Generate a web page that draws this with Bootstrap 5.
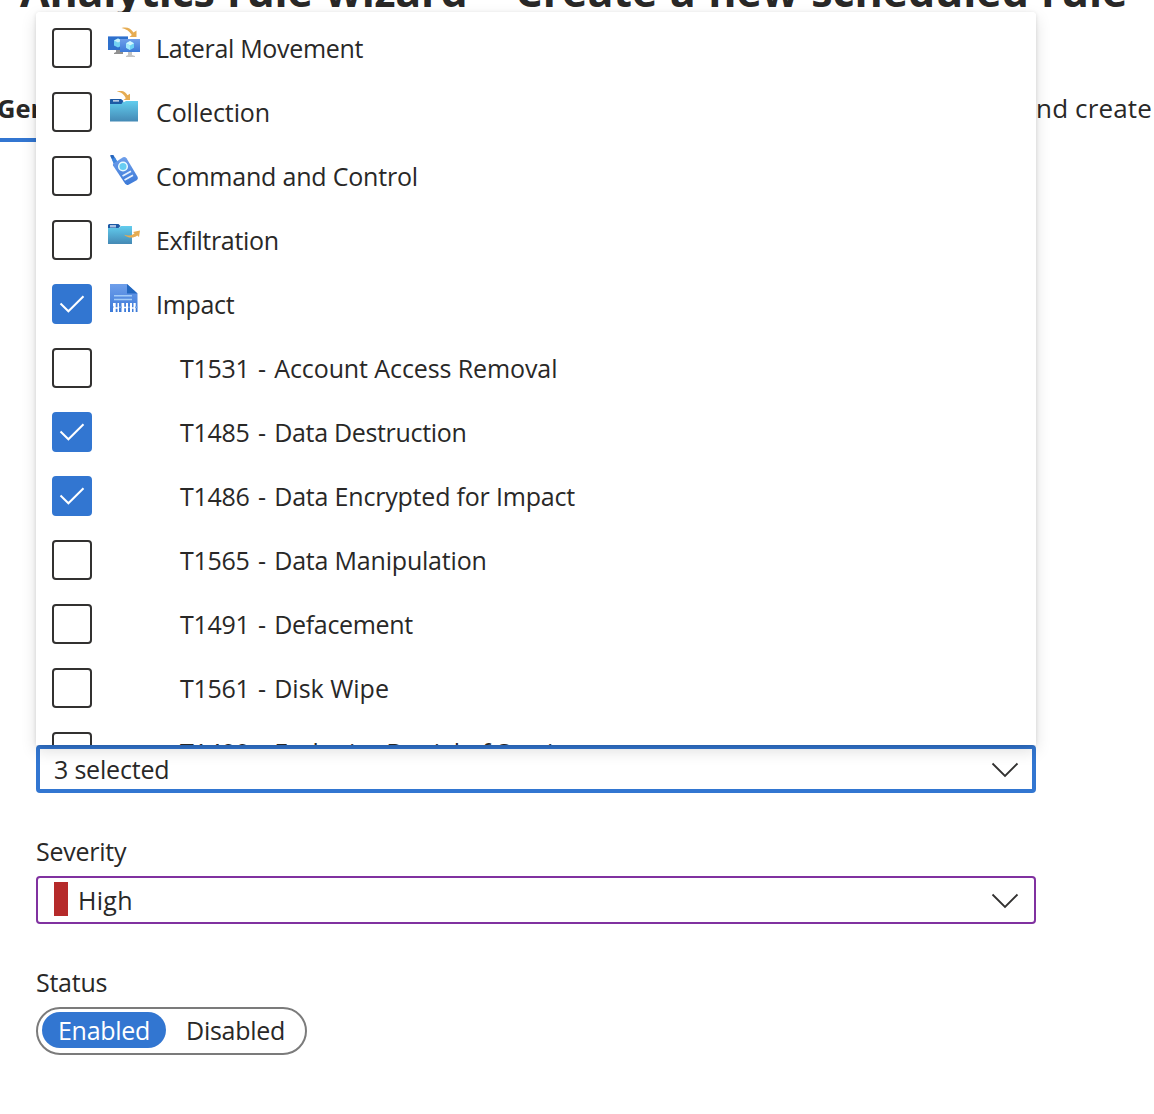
<!DOCTYPE html>
<html lang="en">
<head>
<meta charset="utf-8">
<title>Analytics rule wizard</title>
<meta name="viewport" content="width=device-width, initial-scale=1">
<link rel="stylesheet" href="https://cdn.jsdelivr.net/npm/bootstrap@5.3.0/dist/css/bootstrap.min.css">
<style>
body{font-family:"Open Sans","Noto Sans",sans-serif;font-size:25px;line-height:36px;color:#292827;background:#fff;height:1114px;overflow:hidden}
.wizard{height:1114px;overflow:hidden}
.wizard-title{font-size:43px;font-weight:700;line-height:56px;margin:-37px 0 0 20px;white-space:nowrap;letter-spacing:-.08px;word-spacing:1.5px}
.title-name{letter-spacing:-.22px}
.title-dash{margin:0 4.5px}
.wizard-tabs{height:123px;padding-top:71px;margin-left:-3px;padding-right:2px}
.tab-current{height:52px;font-weight:700;font-size:25.5px;border-bottom:4px solid #3276d1}
.tab-last{font-size:26px;letter-spacing:.15px}
.fields{width:1000px;margin-left:36px;padding-top:603px}
.picker{border:2px solid #8031a0;border-radius:4px;height:48px;padding:0 15px 0 16px}
.picker-open{border:4px solid #3276d1;padding:0 13px 0 14px}
.chev{width:28px;height:16px;position:relative;top:1px}
.sev{width:14px;height:34px;background:#b52a2a;margin:-2px 10px 0 0}
.lbl{height:36px;margin:40px 0 7px;letter-spacing:-.25px}
.tight{letter-spacing:-.2px}
.tighter{letter-spacing:-.33px}
.toggle-pill{border:2px solid #7b7b7b;border-radius:24px;width:271px;height:48px;padding:0 4px}
.toggle-on{background:#3276d1;color:#fff;border-radius:18px;height:36px;width:124px}
.toggle-pill>span{margin-top:-2px;letter-spacing:-.3px}
.toggle-off{padding-left:4px}
.callout{left:36px;top:12px;width:1000px;height:733px;padding:4px 16px 0;background:#fff;border-radius:4px 4px 0 0;overflow:hidden}
.callout-shadow{left:36px;top:12px;width:1000px;height:733px;border-radius:4px;box-shadow:0 6px 16px rgba(0,0,0,.13),0 1px 4px rgba(0,0,0,.12)}
.opt{height:64px;white-space:nowrap}
.box{width:40px;height:40px;border:2px solid #323130;border-radius:4px;flex:none}
.box.on{background:#3276d1;border-color:#3276d1}
.box svg{display:block;width:36px;height:36px}
.ico{width:32px;height:32px;margin:0 16px;position:relative;top:-5px;flex:none}
.sub-opt{margin-left:88px;white-space:pre}
.tid{letter-spacing:-.27px;word-spacing:2.200px}
</style>
<script src="https://cdn.jsdelivr.net/npm/bootstrap@5.3.0/dist/js/bootstrap.bundle.min.js"></script>
</head>
<body>
<div class="wizard position-relative">
  <h1 class="wizard-title"><span class="title-name">Analytics rule wizard</span> <span class="title-dash">-</span> Create a new scheduled rule</h1>
  <div class="wizard-tabs d-flex justify-content-between">
    <div class="tab-current">General</div>
    <div class="tab-last">Review and create</div>
  </div>
  <main class="fields">
    <div class="picker picker-open d-flex align-items-center justify-content-between">
      <span class="tight">3 selected</span>
      <svg class="chev" viewBox="0 0 28 16" fill="none" stroke="#323130" stroke-width="1.800"><path d="M1.500 1.500 14 14 26.500 1.500"/></svg>
    </div>
    <div class="lbl">Severity</div>
    <div class="picker d-flex align-items-center">
      <span class="sev"></span><span class="me-auto" style="letter-spacing:.3px">High</span>
      <svg class="chev" viewBox="0 0 28 16" fill="none" stroke="#323130" stroke-width="1.800"><path d="M1.500 1.500 14 14 26.500 1.500"/></svg>
    </div>
    <div class="lbl">Status</div>
    <div class="toggle-pill d-flex align-items-center">
      <span class="toggle-on d-flex align-items-center justify-content-center">Enabled</span>
      <span class="toggle-off flex-fill text-center">Disabled</span>
    </div>
  </main>

  <div class="callout-shadow position-absolute"></div>
  <div class="callout position-absolute">
    <div class="opt d-flex align-items-center"><span class="box"></span>
      <svg class="ico" viewBox="0 0 32 32">
        <defs><linearGradient id="scr" x2="0" y2="1"><stop stop-color="#6f9fea"/><stop offset="1" stop-color="#3b79d8"/></linearGradient>
        <linearGradient id="fold" x2="0" y2="1"><stop stop-color="#62cdee"/><stop offset="1" stop-color="#4489b5"/></linearGradient></defs>
        <path fill="#909090" d="M8 22h5v3h2v2H6v-1l2-1z"/><path fill="#2e70cc" d="M0 9h20v14H0z"/><path fill="#80a8e5" d="M0 9h20v1H0z"/>
        <path fill="#72d2f2" d="m10 11.500 4 2v5l-4 2-4-2v-5z"/><path fill="#c7f1fb" d="m6 13.500 4-2 4 2-4 2z"/>
        <path fill="#c4c4c4" d="M20 25h4v3l3 1v1h-9v-1l2-1z"/><path fill="url(#scr)" d="M12 12h20v13H12z"/>
        <path fill="#6dd3f4" d="m22 14 4 2.300v4.400L22 23l-4-2.300v-4.400z"/><path fill="#d3f6ff" d="m18 16.300 4-2.300 4 2.300-4 2.200z"/><path fill="#a1e8fb" d="m18 16.300 4 2.200V23l-4-2.300z"/>
        <path fill="#e6ac52" d="M13.500 1c5.500-1.500 9.500.5 12 4.500l3-2V10h-7l2.300-2C21 3.700 18.500 2.300 13.500 1z"/>
      </svg><span class="tighter">Lateral Movement</span></div>
    <div class="opt d-flex align-items-center"><span class="box"></span>
      <svg class="ico" viewBox="0 0 32 32">
        <path fill="url(#fold)" d="M2 11h14l2-1h12v20.500H2z"/><path fill="#1d5aa5" d="M2.500 8H13l2.500 2-2 3H2V8.500z"/><path stroke="#e5eef9" stroke-width="1.300" d="M5 9.800h6"/>
        <path fill="#e6ac52" d="M9 .2c5-1.300 8.500.6 10.500 4l2.500-1.500V9h-6.500l2.300-1.800C16 2.900 13 1.200 9 .2z"/>
      </svg><span style="letter-spacing:-.1px">Collection</span></div>
    <div class="opt d-flex align-items-center"><span class="box"></span>
      <svg class="ico" viewBox="0 0 32 32">
        <path fill="#2767bf" d="m2 .5 3-1.300 3.500 6.500-3 2z"/><path fill="#3e86df" d="m4 4 3-1.500 3 5L6 10z"/>
        <path fill="url(#scr)" d="M5.500 8.500 15 2.300q2-1 3.500 1L29.700 22q.8 2-1 3.200l-8.200 4.500q-2 .8-3.500-1.200L5 10.500q-.5-1.200.5-2z"/>
        <circle cx="15" cy="11.500" r="4.300" fill="#67cdf2" stroke="#e8faff" stroke-width="1.500"/>
        <path stroke="#e5f1ff" stroke-width="1.800" d="m14.500 21 8.500-4.800M16.500 25l8.500-4.800"/>
      </svg><span class="tight">Command and Control</span></div>
    <div class="opt d-flex align-items-center"><span class="box"></span>
      <svg class="ico" viewBox="0 0 32 32">
        <path fill="url(#fold)" d="M0 8.500h11.500l1.500-1.500h11v18H0z"/><path fill="#1d5aa5" d="M1 5h9.500L12.500 7 10.500 9H0V6z"/><path stroke="#a8bfe1" stroke-width="2.500" d="M2 7.300h6"/>
        <path fill="#e6ac52" d="M16 15.800c4 1.400 8 .9 10.500-1.500l-1.500-1.300 7-1.500-1 6.500-1.800-1.500C26 19.500 19.500 19.300 16 15.800z"/>
      </svg><span class="tighter">Exfiltration</span></div>
    <div class="opt d-flex align-items-center"><span class="box on"><svg viewBox="0 0 36 36" fill="none" stroke="#fff" stroke-width="2"><path d="m6.500 17.500 7.900 7.800L29.500 10.200"/></svg></span>
      <svg class="ico" viewBox="0 0 32 32">
        <path fill="url(#scr)" d="M2 1h17l10.500 9.500V29H2z"/><path fill="#2267bf" d="M19 1v9.500h10.500z"/><path stroke="#a3ccf7" stroke-width="1.500" d="M6 12.800h18M6 16.500h18"/>
        <path fill="#fff" d="M5 20h2.700v9H5zM9.500 20h1.500v9H9.500zM13.500 20h2.700v9h-2.700zM18 20h2v9h-2zM22 20h2v9h-2zM25.500 20h2.200v9h-2.200z"/>
        <path stroke="#fff" stroke-width="1.500" d="M7 25h3M15 24.500h4M23 25h3"/>
        <path fill="#79a9ea" d="M5 23.500h1v1H5zM11 23.500h3V25h-3zM20 23.500h2V25h-2zM27 23.500h2.500V25H27z"/>
      </svg><span class="tighter">Impact</span></div>
    <div class="opt d-flex align-items-center"><span class="box"></span><span class="sub-opt"><span class="tid">T1531 - </span><span style="letter-spacing:-.1px">Account Access Removal</span></span></div>
    <div class="opt d-flex align-items-center"><span class="box on"><svg viewBox="0 0 36 36" fill="none" stroke="#fff" stroke-width="2"><path d="m6.500 17.500 7.900 7.800L29.500 10.200"/></svg></span><span class="sub-opt"><span class="tid">T1485 - </span><span class="tighter">Data Destruction</span></span></div>
    <div class="opt d-flex align-items-center"><span class="box on"><svg viewBox="0 0 36 36" fill="none" stroke="#fff" stroke-width="2"><path d="m6.500 17.500 7.900 7.800L29.500 10.200"/></svg></span><span class="sub-opt"><span class="tid">T1486 - </span><span class="tight">Data Encrypted for Impact</span></span></div>
    <div class="opt d-flex align-items-center"><span class="box"></span><span class="sub-opt"><span class="tid">T1565 - </span><span class="tight">Data Manipulation</span></span></div>
    <div class="opt d-flex align-items-center"><span class="box"></span><span class="sub-opt"><span class="tid">T1491 - </span><span class="tighter">Defacement</span></span></div>
    <div class="opt d-flex align-items-center"><span class="box"></span><span class="sub-opt"><span class="tid">T1561 - </span><span>Disk Wipe</span></span></div>
    <div class="opt d-flex align-items-center"><span class="box"></span><span class="sub-opt"><span class="tid">T1499 - </span><span>Endpoint Denial of Service</span></span></div>
  </div>
</div>
</body>
</html>
